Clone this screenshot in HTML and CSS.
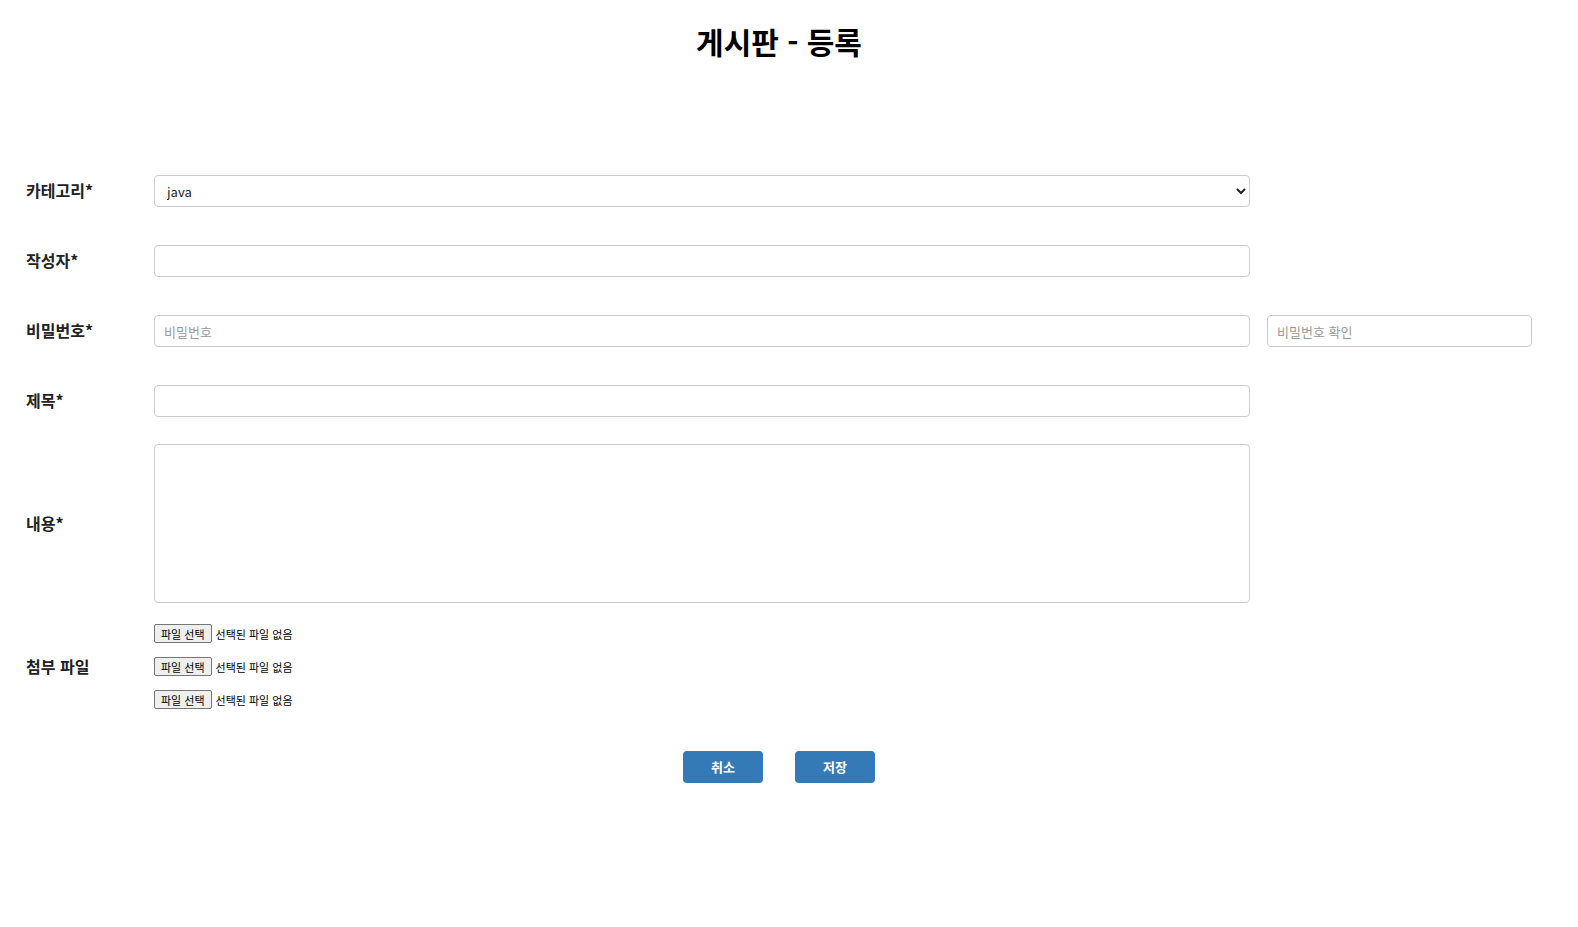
FILE: index.html
```html
<!DOCTYPE html>
<html lang="ko">
<head>
<meta charset="utf-8">
<title>게시판 - 등록</title>
<link rel="stylesheet" href="styles.css">
</head>
<body>
<div class="page">
  <h1 class="title">게시판 - 등록</h1>
  <form class="form">
    <div class="row row-first">
      <label class="label">카테고리*</label>
      <select class="control">
        <option>java</option>
      </select>
    </div>
    <div class="row">
      <label class="label">작성자*</label>
      <input class="control" type="text">
    </div>
    <div class="row">
      <label class="label">비밀번호*</label>
      <input class="control" type="password" placeholder="비밀번호">
      <input class="control confirm" type="password" placeholder="비밀번호 확인">
    </div>
    <div class="row">
      <label class="label">제목*</label>
      <input class="control" type="text">
    </div>
    <div class="row row-text">
      <label class="label">내용*</label>
      <textarea class="control area"></textarea>
    </div>
    <div class="row row-files">
      <label class="label">첨부 파일</label>
      <div class="files">
        <div class="file"><span class="file-btn">파일 선택</span><span class="file-name">선택된 파일 없음</span></div>
        <div class="file"><span class="file-btn">파일 선택</span><span class="file-name">선택된 파일 없음</span></div>
        <div class="file"><span class="file-btn">파일 선택</span><span class="file-name">선택된 파일 없음</span></div>
      </div>
    </div>
    <div class="actions">
      <button type="button" class="btn">취소</button>
      <button type="button" class="btn">저장</button>
    </div>
  </form>
</div>
</body>
</html>
```
FILE: styles.css
```css
html, body {
  margin: 0;
  padding: 0;
  background: #fff;
}
body {
  font-family: "Noto Sans CJK KR", "Noto Sans", sans-serif;
  color: #000;
}
.page {
  width: 1558px;
}
.title {
  margin: 21px 0 0;
  font-size: 30px;
  line-height: 40px;
  font-weight: 700;
  text-align: center;
}
.form {
  padding-left: 26px;
}
.row {
  display: flex;
  align-items: center;
  margin-top: 38px;
}
.row-first {
  margin-top: 114px;
}
.row-text {
  margin-top: 27px;
}
.row-files {
  margin-top: 21px;
}
.label {
  width: 128px;
  flex: none;
  font-size: 16px;
  font-weight: 700;
  color: #222;
  line-height: 20px;
  padding-bottom: 2px;
}
.control {
  box-sizing: border-box;
  width: 1096px;
  height: 32px;
  margin: 0;
  padding: 0 9px;
  border: 1px solid #ccc;
  border-radius: 4px;
  background: #fff;
  font-family: "Noto Sans CJK KR", "Noto Sans", sans-serif;
  font-size: 13px;
  color: #222;
  outline: none;
}
select.control {
  padding-left: 8px;
  padding-right: 4px;
}
.control::placeholder {
  color: #999;
}
.confirm {
  width: 265px;
  margin-left: 17px;
}
.area {
  height: 159px;
  resize: none;
}
.files {
  display: flex;
  flex-direction: column;
  gap: 14px;
}
.file {
  display: flex;
  align-items: center;
  height: 19px;
}
.file-btn {
  box-sizing: border-box;
  height: 19px;
  padding: 0 6px;
  display: flex;
  align-items: center;
  background: #efefef;
  border: 1px solid #767676;
  border-radius: 2px;
  font-size: 11px;
  color: #000;
}
.file-name {
  margin-left: 4px;
  font-size: 11px;
  color: #000;
}
.actions {
  display: flex;
  justify-content: center;
  gap: 32px;
  margin: 42px 0 0 -26px;
}
.btn {
  width: 80px;
  height: 32px;
  padding: 0;
  border: none;
  border-radius: 4px;
  background: #337ab7;
  color: #fff;
  font-family: "Noto Sans CJK KR", "Noto Sans", sans-serif;
  font-size: 13px;
  font-weight: 700;
  line-height: 30px;
  cursor: pointer;
}
```
